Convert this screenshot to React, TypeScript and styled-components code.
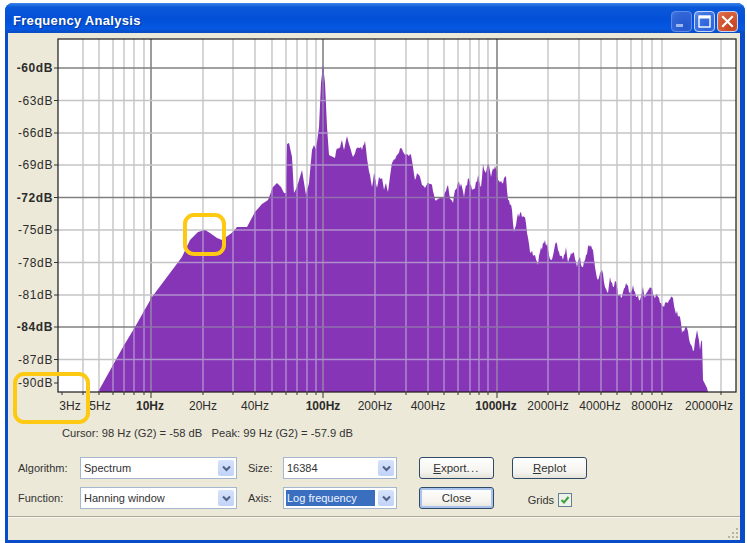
import React from 'react';
import styled, { createGlobalStyle } from 'styled-components';

const GlobalStyle = createGlobalStyle`
  html, body {
    margin: 0;
    padding: 0;
    background: #ffffff;
  }
  body {
    font-family: "Liberation Sans", Arial, sans-serif;
    overflow: hidden;
  }
`;

const Page = styled.div`
  width: 747px;
  height: 543px;
  padding: 3px 2px 0 5px;
  box-sizing: border-box;
  display: flex;
  overflow: hidden;
`;

const Window = styled.div`
  flex: 1;
  display: flex;
  flex-direction: column;
  background: #0a4cc8;
  border-radius: 8px 8px 0 0;
  padding: 0 5px 3px 3px;
  position: relative;
`;

const TitleBar = styled.div`
  height: 30px;
  margin: 0 -5px 0 -3px;
  padding: 0 7px 0 8px;
  display: flex;
  align-items: center;
  justify-content: space-between;
  border-radius: 8px 8px 0 0;
  background: linear-gradient(180deg, #3a86e8 0%, #0a58d8 14%, #0350d8 55%, #0558e2 85%, #0a4cc0 100%);
`;

const Title = styled.span`
  color: #ffffff;
  font-size: 13px;
  font-weight: bold;
  letter-spacing: 0.3px;
  text-shadow: 1px 1px 1px #0a3a9a;
  margin-top: 4px;
`;

const CaptionGroup = styled.div`
  display: flex;
  gap: 2px;
  margin-top: 7px;
`;

const CaptionButton = styled.div<{ $tone: 'dim' | 'blue' | 'close' }>`
  width: 21px;
  height: 21px;
  box-sizing: border-box;
  border: 1px solid ${(p) => (p.$tone === 'dim' ? '#5f8ae8' : '#c4d6f8')};
  border-radius: 4px;
  display: flex;
  align-items: center;
  justify-content: center;
  background: ${(p) =>
    p.$tone === 'close'
      ? 'radial-gradient(circle at 70% 75%, #c4421e 0%, #d9603a 70%, #e27f60 100%)'
      : p.$tone === 'blue'
        ? 'radial-gradient(circle at 70% 75%, #2a62de 0%, #3f74e2 70%, #6f98ea 100%)'
        : 'radial-gradient(circle at 70% 75%, #2456cc 0%, #3166d8 70%, #4a7ade 100%)'};
`;

const Content = styled.div`
  flex: 1;
  display: flex;
  flex-direction: column;
  background: #ece9d8;
  min-height: 0;
`;

const ChartSvg = styled.svg`
  display: block;
  width: 732px;
  height: 392px;
  flex: none;
`;

const AxisText = styled.text<{ $bold?: boolean; $spaced?: boolean }>`
  font-family: "Liberation Sans", Arial, sans-serif;
  font-size: 12px;
  font-weight: ${(p) => (p.$bold ? 'bold' : 'normal')};
  letter-spacing: ${(p) => (p.$spaced ? '0.6px' : '0')};
  fill: #2c2c2c;
`;

const Readout = styled.div`
  height: 16px;
  line-height: 16px;
  padding-left: 54px;
  font-size: 11.2px;
  color: #333333;
  white-space: pre;
`;

const Controls = styled.div`
  margin-top: 16px;
  padding-left: 10px;
  display: grid;
  grid-template-columns: 62px 157px 11px 35px 114px 22px 75px 18px 75px;
  grid-template-rows: 22px 22px;
  row-gap: 8px;
`;

const FieldLabel = styled.label<{ $col: number }>`
  grid-column: ${(p) => p.$col};
  align-self: center;
  font-size: 11px;
  color: #333333;
`;

const SelectBox = styled.div<{ $col: number }>`
  grid-column: ${(p) => p.$col};
  box-sizing: border-box;
  border: 1px solid #a4b7cf;
  background: #ffffff;
  display: flex;
  align-items: stretch;
  padding: 2px;
`;

const SelectValue = styled.span<{ $selected?: boolean }>`
  flex: 1;
  display: flex;
  align-items: center;
  font-size: 11px;
  padding-left: 1px;
  margin-right: 3px;
  color: ${(p) => (p.$selected ? '#eef3ff' : '#333333')};
  background: ${(p) => (p.$selected ? '#3a6fc0' : 'transparent')};
`;

const SelectArrow = styled.span`
  width: 16px;
  flex: none;
  border-radius: 2px;
  display: flex;
  align-items: center;
  justify-content: center;
  background: linear-gradient(180deg, #d6e2fb 0%, #c2d3f8 100%);
`;

const PushButton = styled.button<{ $col: number; $default?: boolean }>`
  grid-column: ${(p) => p.$col};
  margin: 0;
  padding: 0;
  font-family: "Liberation Sans", Arial, sans-serif;
  font-size: 11.5px;
  color: #333333;
  border: 1px solid #2f4a66;
  border-radius: 3px;
  background: linear-gradient(180deg, #ffffff 0%, #f4f3ee 70%, #e4e2d8 100%);
  box-shadow: ${(p) => (p.$default ? 'inset 0 0 0 2px #a9c3ee' : 'none')};
`;

const SpacedDots = styled.span`
  letter-spacing: 1.2px;
`;

const GridsToggle = styled.div`
  grid-column: 9;
  display: flex;
  align-items: center;
  justify-content: flex-end;
  gap: 4px;
  padding-right: 15px;
  margin-top: 4px;
  font-size: 11px;
  color: #333333;
`;

const CheckBox = styled.span`
  width: 14px;
  height: 14px;
  box-sizing: border-box;
  border: 1px solid #5f8299;
  background: #eef2ea;
  display: flex;
  align-items: center;
  justify-content: center;
`;

const StatusBar = styled.div`
  margin-top: auto;
  height: 23px;
  border-top: 1px solid #aca899;
  box-shadow: inset 0 1px 0 #f8f6ee;
  position: relative;
`;

const Grip = styled.svg`
  position: absolute;
  right: 1px;
  bottom: 1px;
`;

const Callout = styled.div<{ $x: number; $y: number; $w: number; $h: number }>`
  position: absolute;
  left: ${(p) => p.$x}px;
  top: ${(p) => p.$y}px;
  width: ${(p) => p.$w}px;
  height: ${(p) => p.$h}px;
  box-sizing: border-box;
  border: 4px solid #fdc913;
  border-radius: 11px;
`;

const HORIZONTAL = [68, 100.5, 133, 165, 197.5, 230, 262.5, 295, 327, 359.5];
const VERTICAL = [
  83, 99, 113, 124, 134, 144, 151, 203, 233, 255, 272, 286, 297, 307, 316, 323, 375, 406, 428, 444, 458, 470,
  479, 488, 497, 548, 579, 601, 617, 631, 642, 652, 662, 721,
];
const DARK_H = [68, 197.5, 327];
const DARK_V = [151, 323, 497];
const MAJOR_TICKS = [151, 323, 497];

const DB_LABELS: [string, number, boolean][] = [
  ['-60dB', 68, true],
  ['-63dB', 100.5, false],
  ['-66dB', 133, false],
  ['-69dB', 165, false],
  ['-72dB', 197.5, true],
  ['-75dB', 230, false],
  ['-78dB', 262.5, false],
  ['-81dB', 295, false],
  ['-84dB', 327, true],
  ['-87dB', 359.5, false],
  ['-90dB', 383, false],
];

const HZ_LABELS: [string, number, boolean][] = [
  ['3Hz', 70, false],
  ['5Hz', 100, false],
  ['10Hz', 150, true],
  ['20Hz', 203, false],
  ['40Hz', 255, false],
  ['100Hz', 323, true],
  ['200Hz', 375, false],
  ['400Hz', 428, false],
  ['1000Hz', 496, true],
  ['2000Hz', 548, false],
  ['4000Hz', 600, false],
  ['8000Hz', 652, false],
  ['20000Hz', 709, false],
];

// outline of the spectrum, read off the reference
const OUTLINE: [number, number][] = [
  [98, 392], [123, 347], [135, 327], [152, 297], [182, 257], [190, 240], [198, 232], [205, 230], [210, 233],
  [217, 238], [222, 240], [233, 232], [237, 227], [247, 227], [255, 212], [262, 204], [268, 200], [273, 187],
  [277, 183], [281, 187], [284, 193], [286, 193], [287, 144], [289, 143], [292, 157], [294, 193], [297, 187],
  [302, 170], [306, 195], [309, 183], [312, 150], [314, 145], [316, 150], [319, 127], [321, 83], [323, 65],
  [325, 83], [327, 127], [329, 155], [335, 158], [337, 148], [340, 148], [342, 140], [344, 150], [347, 136],
  [350, 147], [353, 157], [357, 148], [361, 147], [362, 150], [365, 141], [368, 165], [372, 187], [374, 173],
  [377, 188], [379, 177], [382, 178], [384, 190], [386, 183], [388, 192], [392, 163], [397, 155], [401, 148],
  [405, 155], [408, 155], [411, 155], [415, 180], [417, 173], [420, 177], [422, 185], [425, 188], [428, 183],
  [432, 185], [435, 200], [440, 198], [443, 198], [448, 185], [450, 199], [453, 203], [455, 190], [458, 183],
  [462, 187], [464, 197], [468, 178], [472, 190], [475, 188], [478, 175], [481, 187], [483, 164], [486, 173],
  [488, 164], [491, 177], [495, 166], [498, 180], [502, 183], [506, 176], [508, 200], [512, 210], [514, 232],
  [517, 218], [520, 213], [525, 217], [527, 233], [530, 252], [535, 255], [538, 265], [540, 252], [545, 240],
  [548, 250], [551, 260], [556, 242], [559, 252], [563, 260], [566, 247], [568, 263], [571, 253], [574, 253],
  [577, 267], [580, 257], [582, 267], [586, 255], [589, 245], [593, 250], [595, 267], [598, 280], [602, 270],
  [605, 287], [608, 293], [610, 277], [613, 287], [616, 282], [618, 295], [622, 297], [626, 283], [630, 293],
  [633, 285], [637, 297], [640, 300], [643, 287], [645, 298], [651, 288], [653, 295], [658, 297], [662, 307],
  [665, 303], [673, 298], [675, 310], [680, 317], [682, 333], [687, 328], [690, 343], [694, 350], [697, 330],
  [700, 350], [702, 340], [703, 380], [707, 388], [708, 392],
];

// adds the fine teeth of the FFT bins between the read-off points
const buildSpectrum = (): string => {
  const pts: string[] = [];
  let seed = 7;
  const rand = () => {
    seed = (seed * 16807) % 2147483647;
    return seed / 2147483647;
  };
  OUTLINE.forEach(([x, y], i) => {
    pts.push(`${x},${y}`);
    const next = OUTLINE[i + 1];
    if (!next || x < 330 || x > 700) return;
    const steps = Math.floor(next[0] - x);
    const size = x < 450 ? 3 : 6;
    for (let s = 1; s < steps; s++) {
      const t = s / steps;
      const jitter = (rand() - 0.5) * size;
      pts.push(`${(x + (next[0] - x) * t).toFixed(1)},${(y + (next[1] - y) * t + jitter).toFixed(1)}`);
    }
  });
  return pts.join(' ');
};

const SPECTRUM = buildSpectrum();

const GridLines: React.FC<{ overPurple?: boolean }> = ({ overPurple }) => {
  const light = overPurple ? '#b08fcf' : '#c4c4c4';
  const dark = overPurple ? '#9170ab' : '#808080';
  return (
    <>
      {VERTICAL.map((x) => (
        <line
          key={`v${x}`}
          x1={x}
          x2={x}
          y1={39}
          y2={392}
          stroke={DARK_V.includes(x) ? (overPurple ? dark : '#9c9c9c') : light}
          strokeWidth={DARK_V.includes(x) ? 2 : 1.4}
        />
      ))}
      {HORIZONTAL.map((y) => (
        <line
          key={`h${y}`}
          x1={58}
          x2={736}
          y1={y}
          y2={y}
          stroke={DARK_H.includes(y) ? dark : light}
          strokeWidth={1.4}
        />
      ))}
    </>
  );
};

const Chevron: React.FC = () => (
  <svg width="9" height="7" viewBox="0 0 9 7">
    <path d="M1 1.5 L4.5 5 L8 1.5" fill="none" stroke="#4d6185" strokeWidth="2" />
  </svg>
);

const Select: React.FC<{ col: number; value: string; selected?: boolean }> = ({ col, value, selected }) => (
  <SelectBox $col={col}>
    <SelectValue $selected={selected}>{value}</SelectValue>
    <SelectArrow>
      <Chevron />
    </SelectArrow>
  </SelectBox>
);

const Chart: React.FC = () => (
  <ChartSvg viewBox="8 33 732 392">
    <defs>
      <clipPath id="spectrum-clip">
        <polygon points={SPECTRUM} />
      </clipPath>
    </defs>
    <rect x={58} y={39} width={678} height={353} fill="#ffffff" />
    <GridLines />
    <polygon points={SPECTRUM} fill="#8535b5" />
    <g clipPath="url(#spectrum-clip)">
      <GridLines overPurple />
    </g>
    <rect x={58} y={39} width={678} height={353} fill="none" stroke="#1c1c1c" strokeWidth={1.2} />
    {HORIZONTAL.map((y) => (
      <line key={y} x1={54} x2={58} y1={y} y2={y} stroke="#333333" />
    ))}
    <line x1={54} x2={58} y1={383} y2={383} stroke="#333333" />
    {[62, ...VERTICAL].map((x) => (
      <line key={x} x1={x} x2={x} y1={392} y2={MAJOR_TICKS.includes(x) ? 398 : 395} stroke="#333333" />
    ))}
    {DB_LABELS.map(([label, y, bold]) => (
      <AxisText key={label} x={53} y={y + 4} textAnchor="end" $bold={bold} $spaced>
        {label}
      </AxisText>
    ))}
    {HZ_LABELS.map(([label, x, bold]) => (
      <AxisText key={label} x={x} y={410} textAnchor="middle" $bold={bold}>
        {label}
      </AxisText>
    ))}
  </ChartSvg>
);

const App: React.FC = () => (
  <Page>
    <GlobalStyle />
    <Window>
      <TitleBar>
        <Title>Frequency Analysis</Title>
        <CaptionGroup>
          <CaptionButton $tone="dim">
            <svg width="13" height="13" viewBox="0 0 13 13">
              <rect x="1" y="9" width="7" height="3" fill="#9db8f0" />
            </svg>
          </CaptionButton>
          <CaptionButton $tone="blue">
            <svg width="13" height="13" viewBox="0 0 13 13">
              <rect x="1" y="1" width="11" height="11" fill="none" stroke="#ffffff" strokeWidth="1.4" />
              <rect x="1" y="1" width="11" height="2.5" fill="#ffffff" />
            </svg>
          </CaptionButton>
          <CaptionButton $tone="close">
            <svg width="13" height="13" viewBox="0 0 13 13">
              <path d="M2 2 L11 11 M11 2 L2 11" stroke="#ffffff" strokeWidth="2.2" strokeLinecap="square" />
            </svg>
          </CaptionButton>
        </CaptionGroup>
      </TitleBar>
      <Content>
        <Chart />
        <Readout>{'Cursor: 98 Hz (G2) = -58 dB   Peak: 99 Hz (G2) = -57.9 dB'}</Readout>
        <Controls>
          <FieldLabel $col={1}>Algorithm:</FieldLabel>
          <Select col={2} value="Spectrum" />
          <FieldLabel $col={4}>Size:</FieldLabel>
          <Select col={5} value="16384" />
          <PushButton $col={7}>
            <u>E</u>xport<SpacedDots>...</SpacedDots>
          </PushButton>
          <PushButton $col={9}>
            <u>R</u>eplot
          </PushButton>
          <FieldLabel $col={1}>Function:</FieldLabel>
          <Select col={2} value="Hanning window" />
          <FieldLabel $col={4}>Axis:</FieldLabel>
          <Select col={5} value="Log frequency" selected />
          <PushButton $col={7} $default>
            Close
          </PushButton>
          <GridsToggle>
            Grids
            <CheckBox>
              <svg width="10" height="10" viewBox="0 0 10 10">
                <path d="M1.5 5 L4 7.5 L8.5 2" fill="none" stroke="#3aa23a" strokeWidth="2" />
              </svg>
            </CheckBox>
          </GridsToggle>
        </Controls>
        <StatusBar>
          <Grip width="12" height="12" viewBox="0 0 12 12">
            <g fill="#b8b4a2">
              <rect x="9" y="1" width="2" height="2" />
              <rect x="5" y="5" width="2" height="2" />
              <rect x="9" y="5" width="2" height="2" />
              <rect x="1" y="9" width="2" height="2" />
              <rect x="5" y="9" width="2" height="2" />
              <rect x="9" y="9" width="2" height="2" />
            </g>
          </Grip>
        </StatusBar>
      </Content>
      <Callout $x={8} $y={369} $w={77} $h={52} />
      <Callout $x={178} $y={210} $w={43} $h={43} />
    </Window>
  </Page>
);

export default App;
